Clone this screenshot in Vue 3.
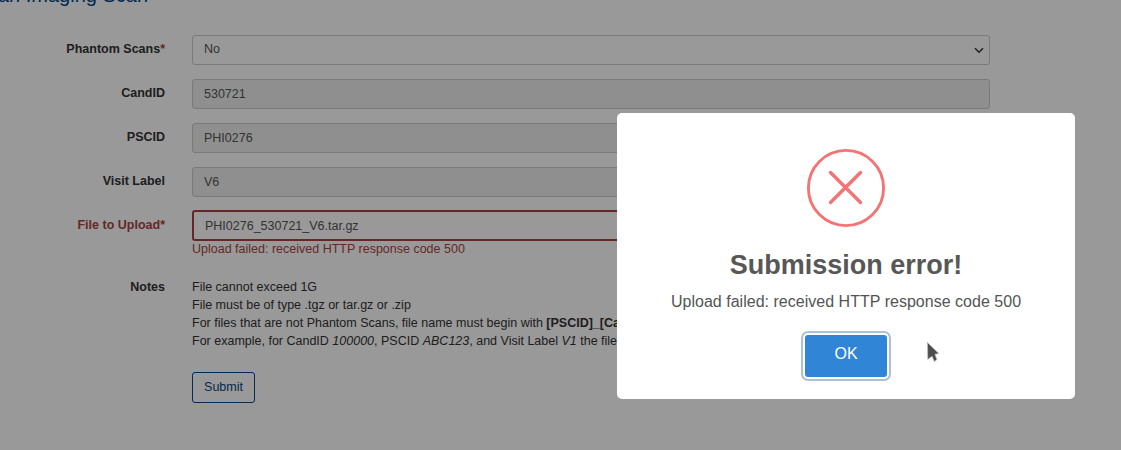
<script setup>
const rows = [
  { label: 'CandID', value: '530721' },
  { label: 'PSCID', value: 'PHI0276' },
  { label: 'Visit Label', value: 'V6' },
]
</script>

<template>
  <div class="page">
    <h3 class="title">Upload an Imaging Scan</h3>
    <form class="form" @submit.prevent>
      <div class="row">
        <label class="lbl">Phantom Scans<span class="req">*</span></label>
        <div class="field">
          <div class="control select">
            <span>No</span>
            <svg class="chev" width="10" height="7" viewBox="0 0 10 7"><path d="M1 1.2 5 5.2 9 1.2" fill="none" stroke="#3a3a3a" stroke-width="1.6"/></svg>
          </div>
        </div>
      </div>
      <div v-for="r in rows" :key="r.label" class="row">
        <label class="lbl">{{ r.label }}</label>
        <div class="field"><div class="control disabled">{{ r.value }}</div></div>
      </div>
      <div class="row err">
        <label class="lbl errlbl">File to Upload<span>*</span></label>
        <div class="field">
          <div class="control file">PHI0276_530721_V6.tar.gz</div>
          <div class="help">Upload failed: received HTTP response code 500</div>
        </div>
      </div>
      <div class="row notes">
        <label class="lbl">Notes</label>
        <div class="field notetext">
          <div>File cannot exceed 1G</div>
          <div>File must be of type .tgz or tar.gz or .zip</div>
          <div>For files that are not Phantom Scans, file name must begin with <b>[PSCID]_[CandID]_[Visit Label]</b></div>
          <div>For example, for CandID <i>100000</i>, PSCID <i>ABC123</i>, and Visit Label <i>V1</i> the file name should begin with: <b>ABC123_100000_V1</b></div>
        </div>
      </div>
      <div class="row submitrow">
        <div class="lbl"></div>
        <div class="field"><button type="button" class="submit">Submit</button></div>
      </div>
    </form>

    <div class="overlay"></div>
    <div class="modal">
      <svg class="icon" width="80" height="80" viewBox="0 0 80 80">
        <circle cx="40" cy="40" r="37.6" fill="#fff" stroke="#f27474" stroke-width="2.9"/>
        <path d="M24.5 24.5 54.5 54.5M54.5 24.5 24.5 54.5" fill="none" stroke="#f27474" stroke-width="3.4" stroke-linecap="round"/>
      </svg>
      <h2 class="mtitle">Submission error!</h2>
      <p class="mtext">Upload failed: received HTTP response code 500</p>
      <button type="button" class="ok">OK</button>
    </div>
    <svg class="cursor" width="16" height="24" viewBox="0 0 16 24">
      <path d="M1.4 1.4 12.8 12.6 8.9 13.2 10.9 18.6 8.4 20.6 6 15.2 1.8 18.4Z" fill="#4d4d4d" stroke="#bdbdbd" stroke-width=".7" stroke-linejoin="round"/>
    </svg>
  </div>
</template>

<style scoped>
.page {
  position: relative;
  width: 1121px;
  height: 450px;
  overflow: hidden;
  background: #fff;
  font-family: "Liberation Sans", Arial, sans-serif;
  font-size: 12.5px;
  color: #333;
}
.title {
  margin: -17px 0 0 -71px;
  height: 31px;
  font-size: 20px;
  line-height: 24px;
  font-weight: 400;
  color: #064785;
  white-space: nowrap;
}
.form {
  display: flex;
  flex-direction: column;
  padding-top: 21px;
}
.row {
  display: flex;
  margin-bottom: 14px;
}
.lbl {
  width: 165px;
  flex: none;
  text-align: right;
  font-weight: 700;
  line-height: 18px;
  padding-top: 5px;
  box-sizing: border-box;
}
.req { color: #a94442; }
.field {
  margin-left: 27px;
  width: 798px;
  flex: none;
}
.control {
  box-sizing: border-box;
  height: 30px;
  border: 1px solid #ccc;
  border-radius: 3px;
  padding: 0 11px;
  line-height: 28px;
  color: #555;
  background: #fff;
}
.select {
  display: flex;
  align-items: center;
  justify-content: space-between;
  padding-right: 5px;
  padding-bottom: 2px;
}
.chev { margin-top: 2px; }
.disabled { background: #eee; }
.err {
  margin-top: -1px;
  margin-bottom: 0;
}
.errlbl {
  color: #a94442;
  padding-top: 6px;
}
.file {
  border: 2px solid #a94442;
  height: 31px;
  line-height: 29px;
  color: #555;
}
.help {
  color: #a94442;
  line-height: 16px;
}
.notes {
  margin-top: 21px;
  margin-bottom: 22px;
}
.notes .lbl { padding-top: 0; }
.notetext {
  line-height: 18px;
  white-space: nowrap;
  color: #333;
}
.submit {
  width: 63px;
  height: 31px;
  padding: 0 0 2px;
  font: inherit;
  color: #064785;
  background: transparent;
  border: 1px solid #064785;
  border-radius: 3px;
}
.overlay {
  position: absolute;
  inset: 0;
  background: rgba(0, 0, 0, 0.4);
}
.modal {
  position: absolute;
  left: 617px;
  top: 113px;
  width: 458px;
  height: 286px;
  box-sizing: border-box;
  background: #fff;
  border-radius: 5px;
  display: flex;
  flex-direction: column;
  align-items: center;
  padding-top: 35px;
}
.icon { flex: none; display: block; }
.mtitle {
  margin: 19px 0 0;
  font-size: 27px;
  line-height: 36px;
  font-weight: 700;
  color: #575757;
}
.mtext {
  margin: 9px 0 0;
  font-size: 16px;
  line-height: 20px;
  letter-spacing: 0.02px;
  color: #545454;
}
.ok {
  box-sizing: border-box;
  margin-top: 23px;
  width: 82px;
  height: 42px;
  padding: 0 0 4px;
  border: 0;
  border-radius: 3px;
  background: #3085d6;
  color: #fff;
  font: 16px "Liberation Sans", Arial, sans-serif;
  box-shadow: 0 0 0 2px #fff, 0 0 0 4px rgba(50, 100, 150, 0.4);
}
.cursor {
  position: absolute;
  left: 926px;
  top: 341px;
}
</style>
